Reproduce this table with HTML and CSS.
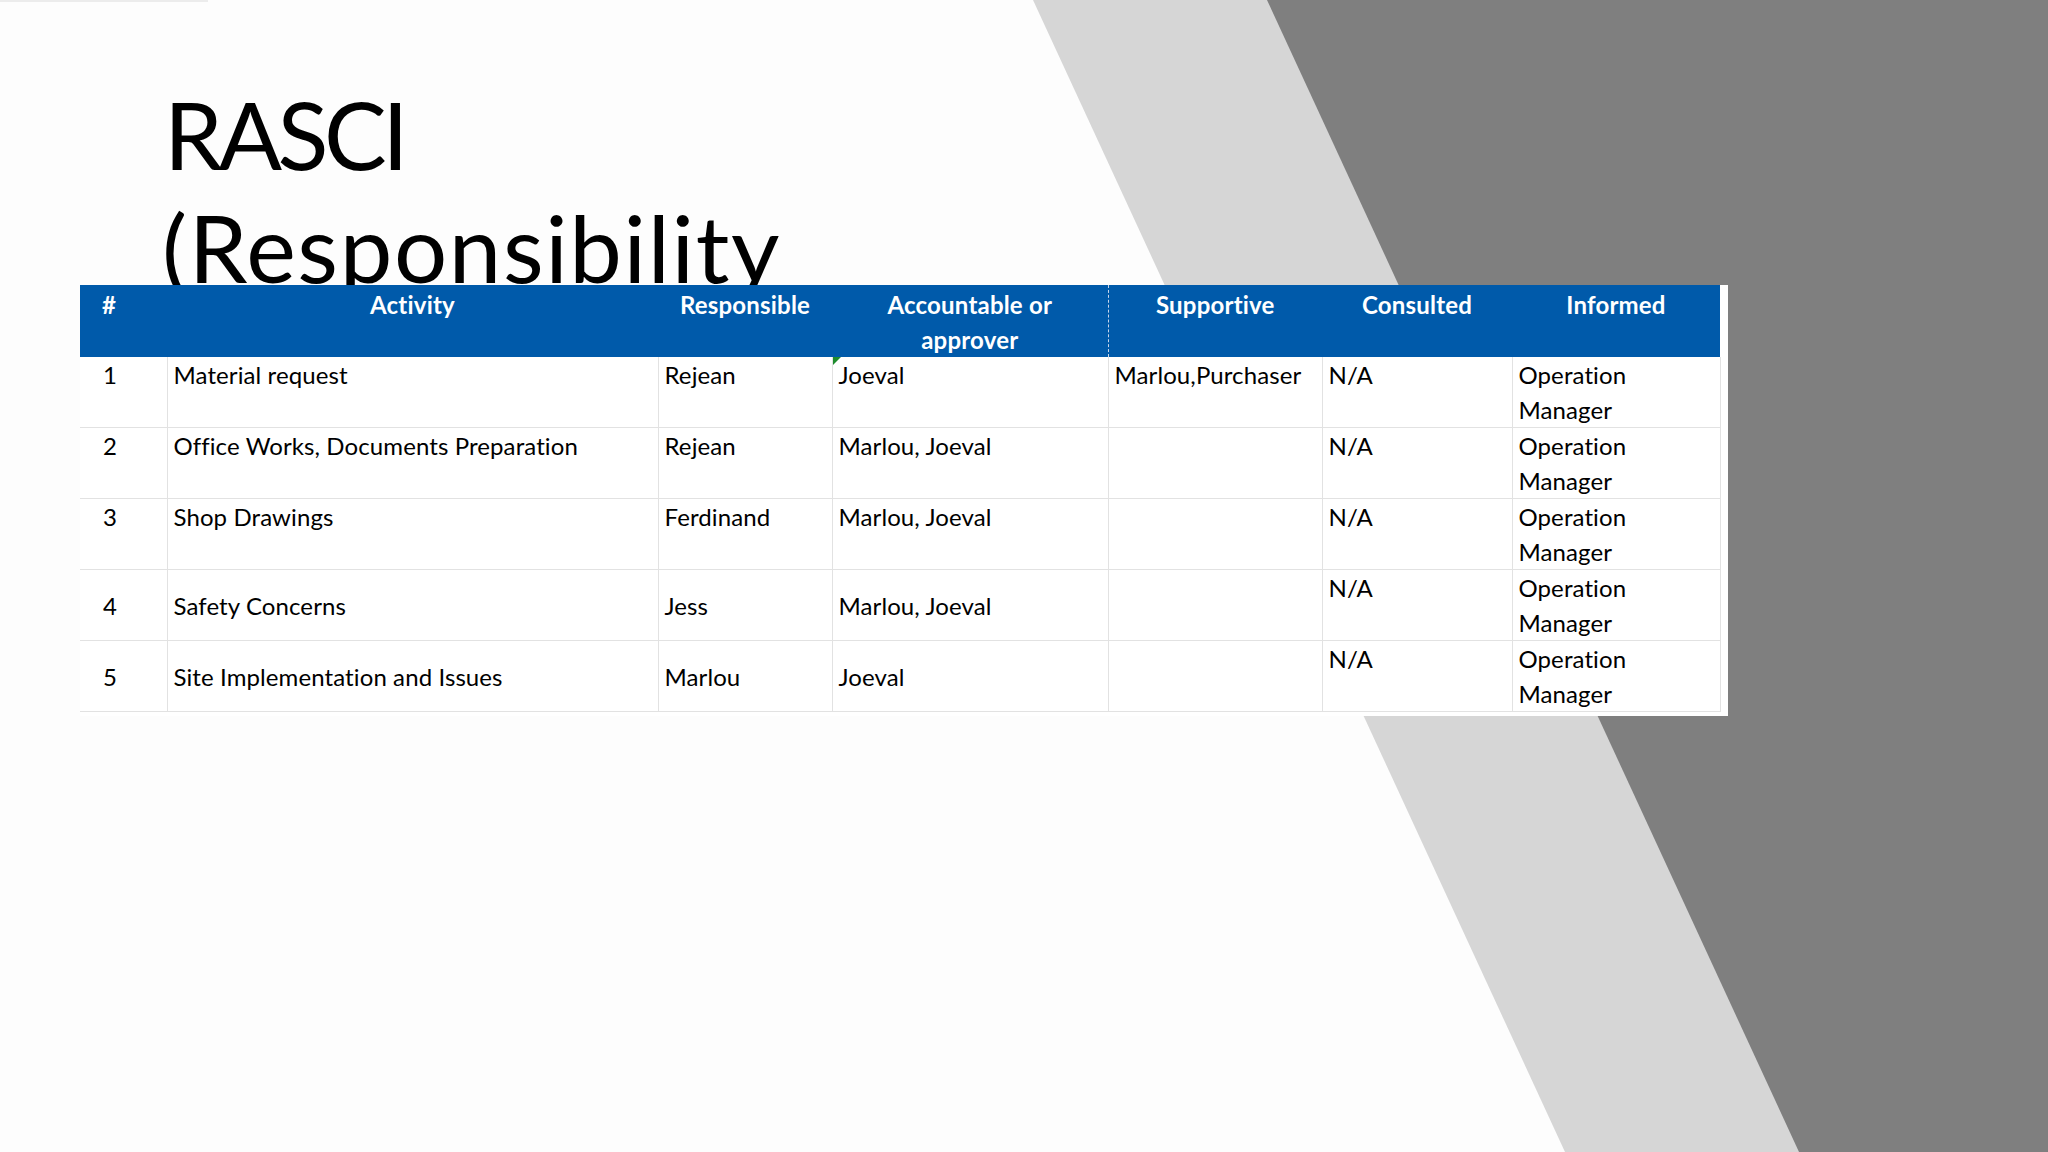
FILE: index.html
```html
<!DOCTYPE html>
<html lang="en">
<head>
<meta charset="utf-8">
<title>RASCI (Responsibility</title>
<link rel="stylesheet" href="styles.css">
</head>
<body>
<div class="slide">
  <svg class="backdrop" viewBox="0 0 2048 1152" preserveAspectRatio="none" aria-hidden="true">
    <polygon class="band-light" points="1033,0 2048,0 2048,1152 1565,1152"/>
    <polygon class="band-dark" points="1267,0 2048,0 2048,1152 1799,1152"/>
  </svg>
  <div class="content">
    <div class="topline"></div>
    <div class="title-box">
      <h1 class="title"><span class="t1">RASCI</span><span class="t2">(Responsibility</span></h1>
    </div>
    <div class="sheet">
      <table class="rasci">
        <colgroup>
          <col class="c-num"><col class="c-act"><col class="c-resp"><col class="c-acc"><col class="c-sup"><col class="c-con"><col class="c-inf">
        </colgroup>
        <thead>
          <tr>
            <th class="num">#</th>
            <th>Activity</th>
            <th>Responsible</th>
            <th>Accountable or<br>approver</th>
            <th class="dash">Supportive</th>
            <th>Consulted</th>
            <th>Informed</th>
          </tr>
        </thead>
        <tbody>
          <tr class="r-top">
            <td class="num">1</td>
            <td>Material request</td>
            <td>Rejean</td>
            <td class="flag">Joeval</td>
            <td class="dash">Marlou,Purchaser</td>
            <td>N/A</td>
            <td>Operation<br>Manager</td>
          </tr>
          <tr class="r-top">
            <td class="num">2</td>
            <td>Office Works, Documents Preparation</td>
            <td>Rejean</td>
            <td>Marlou, Joeval</td>
            <td class="dash"></td>
            <td>N/A</td>
            <td>Operation<br>Manager</td>
          </tr>
          <tr class="r-top">
            <td class="num">3</td>
            <td>Shop Drawings</td>
            <td>Ferdinand</td>
            <td>Marlou, Joeval</td>
            <td class="dash"></td>
            <td>N/A</td>
            <td>Operation<br>Manager</td>
          </tr>
          <tr class="r-mid">
            <td class="num">4</td>
            <td>Safety Concerns</td>
            <td>Jess</td>
            <td>Marlou, Joeval</td>
            <td class="dash"></td>
            <td>N/A</td>
            <td>Operation<br>Manager</td>
          </tr>
          <tr class="r-mid">
            <td class="num">5</td>
            <td>Site Implementation and Issues</td>
            <td>Marlou</td>
            <td>Joeval</td>
            <td class="dash"></td>
            <td>N/A</td>
            <td>Operation<br>Manager</td>
          </tr>
        </tbody>
      </table>
    </div>
  </div>
</div>
</body>
</html>
```
FILE: styles.css
```css
html, body {
  margin: 0;
  padding: 0;
}

body {
  background: #fdfdfd;
  font-family: Lato, "Liberation Sans", sans-serif;
  color: #000;
}

.slide {
  position: relative;
  width: 2048px;
  height: 1152px;
  overflow: hidden;
  background: #fdfdfd;
}

.backdrop {
  position: absolute;
  left: 0;
  top: 0;
  width: 2048px;
  height: 1152px;
  z-index: 0;
}

.band-light { fill: #d6d6d6; }
.band-dark { fill: #7f7f7f; }

.content {
  position: relative;
  z-index: 1;
  display: flex;
  flex-direction: column;
}

.topline {
  width: 208px;
  height: 2px;
  background: #ececec;
}

.title-box {
  height: 283px;
  overflow: hidden;
  padding-left: 162px;
  box-sizing: border-box;
}

.title {
  margin: 75px 0 0 0;
  font-family: Lato, "Liberation Sans", sans-serif;
  font-weight: 400;
  font-size: 94px;
  line-height: 113px;
  color: #000;
}

.t1,
.t2 {
  display: block;
  white-space: nowrap;
}

.t1 {
  letter-spacing: -4.5px;
  padding-left: 2px;
}

.t2 {
  letter-spacing: 1.6px;
}

.sheet {
  margin-left: 80px;
  width: 1648px;
  background: #fff;
  padding: 0 8px 4px 0;
  box-sizing: border-box;
}

.rasci {
  width: 1640px;
  border-collapse: collapse;
  table-layout: fixed;
  font-family: Lato, "Liberation Sans", sans-serif;
  font-size: 24px;
  line-height: 35px;
  letter-spacing: 0.1px;
}

.c-num { width: 87px; }
.c-act { width: 491px; }
.c-resp { width: 174px; }
.c-acc { width: 276px; }
.c-sup { width: 214px; }
.c-con { width: 190px; }
.c-inf { width: 208px; }

.rasci thead tr {
  height: 72px;
  background: #005aaa;
}

.rasci th {
  color: #fff;
  font-weight: 700;
  text-align: center;
  vertical-align: top;
  padding: 2px 0 0 0;
  letter-spacing: 0.2px;
}

.rasci th.num {
  text-align: left;
  padding-left: 22px;
}

.rasci th.dash {
  border-left: 1px dashed #c8d6ea;
}

.rasci td {
  vertical-align: top;
  padding: 0 4px 0 6px;
  border-left: 1px solid #e2e2e2;
  border-right: 1px solid #e2e2e2;
  border-bottom: 1px solid #e2e2e2;
  white-space: nowrap;
  overflow: visible;
}

.rasci td.num {
  padding-left: 23px;
  border-left: none;
}

.rasci td.dash {
  border-left: 1px dashed #8a8a8a;
}

.rasci tbody tr { height: 71px; }
.rasci tbody tr:nth-child(1),
.rasci tbody tr:nth-child(4) { height: 70px; }

.r-mid td:nth-child(-n+4) {
  vertical-align: middle;
}

.flag {
  position: relative;
}

.flag::before {
  content: "";
  position: absolute;
  left: 0;
  top: 0;
  border-top: 8px solid #1e8c2e;
  border-right: 8px solid transparent;
}
```
